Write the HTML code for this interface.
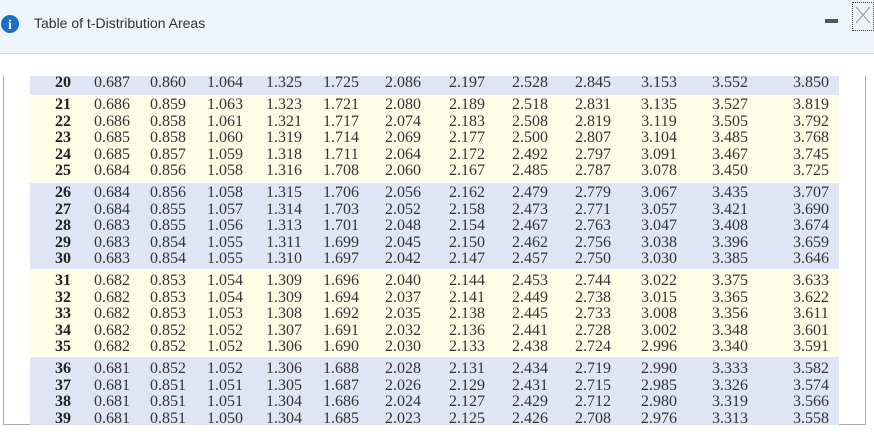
<!DOCTYPE html>
<html><head><style>
body{margin:0;width:874px;height:448px;background:#fff;position:relative;overflow:hidden;font-family:"Liberation Serif",serif;}
.hdr{position:absolute;left:0;top:0;width:874px;height:53px;background:#eef5fd;border-bottom:1px solid #c9ddf2;}
.title{position:absolute;left:34px;top:15px;font:14px "Liberation Sans",sans-serif;color:#333;}
.box{position:absolute;left:3px;top:76px;width:861px;height:348px;border:1px solid #aaa;border-top:none;}
.band{position:absolute;left:30px;width:809px;}
.r{position:absolute;left:0;width:874px;height:18px;line-height:18px;font-size:16px;color:#333;}
.r span{position:absolute;width:60px;text-align:center;}
.r b{position:absolute;left:55px;font-weight:bold;color:#222;}
</style></head><body>
<div class="hdr">
<svg style="position:absolute;left:0;top:14px" width="20" height="20"><circle cx="10" cy="10" r="9" fill="#1a6fc6"/><text x="10" y="15" text-anchor="middle" fill="#fff" font-family="Liberation Serif" font-weight="bold" font-size="14">i</text></svg>
<div class="title">Table of t-Distribution Areas</div>
<div style="position:absolute;left:825px;top:19px;width:13px;height:4px;background:#555"></div>
<div style="position:absolute;left:852px;top:2px;width:20px;height:27px;border:1px dotted #444;"><svg width="20" height="27"><path d="M3 4L17 20M17 4L3 20" stroke="#999" stroke-width="1"/></svg></div>
</div>
<div class="box"></div>
<div class="band" style="top:76px;height:19px;background:#dfe5f5"></div>
<div class="band" style="top:96px;height:86px;background:#fefee6"></div>
<div class="band" style="top:183px;height:86px;background:#dfe5f5"></div>
<div class="band" style="top:270px;height:86px;background:#fefee6"></div>
<div class="band" style="top:357px;height:68px;background:#dfe5f5"></div>
<div class="r" style="top:74px"><b>20</b><span style="left:82px">0.687</span><span style="left:138px">0.860</span><span style="left:195px">1.064</span><span style="left:254px">1.325</span><span style="left:311px">1.725</span><span style="left:373px">2.086</span><span style="left:437px">2.197</span><span style="left:500px">2.528</span><span style="left:563px">2.845</span><span style="left:629px">3.153</span><span style="left:700px">3.552</span><span style="left:781px">3.850</span></div>
<div class="r" style="top:96px"><b>21</b><span style="left:82px">0.686</span><span style="left:138px">0.859</span><span style="left:195px">1.063</span><span style="left:254px">1.323</span><span style="left:311px">1.721</span><span style="left:373px">2.080</span><span style="left:437px">2.189</span><span style="left:500px">2.518</span><span style="left:563px">2.831</span><span style="left:629px">3.135</span><span style="left:700px">3.527</span><span style="left:781px">3.819</span></div>
<div class="r" style="top:112.5px"><b>22</b><span style="left:82px">0.686</span><span style="left:138px">0.858</span><span style="left:195px">1.061</span><span style="left:254px">1.321</span><span style="left:311px">1.717</span><span style="left:373px">2.074</span><span style="left:437px">2.183</span><span style="left:500px">2.508</span><span style="left:563px">2.819</span><span style="left:629px">3.119</span><span style="left:700px">3.505</span><span style="left:781px">3.792</span></div>
<div class="r" style="top:129px"><b>23</b><span style="left:82px">0.685</span><span style="left:138px">0.858</span><span style="left:195px">1.060</span><span style="left:254px">1.319</span><span style="left:311px">1.714</span><span style="left:373px">2.069</span><span style="left:437px">2.177</span><span style="left:500px">2.500</span><span style="left:563px">2.807</span><span style="left:629px">3.104</span><span style="left:700px">3.485</span><span style="left:781px">3.768</span></div>
<div class="r" style="top:145.5px"><b>24</b><span style="left:82px">0.685</span><span style="left:138px">0.857</span><span style="left:195px">1.059</span><span style="left:254px">1.318</span><span style="left:311px">1.711</span><span style="left:373px">2.064</span><span style="left:437px">2.172</span><span style="left:500px">2.492</span><span style="left:563px">2.797</span><span style="left:629px">3.091</span><span style="left:700px">3.467</span><span style="left:781px">3.745</span></div>
<div class="r" style="top:162px"><b>25</b><span style="left:82px">0.684</span><span style="left:138px">0.856</span><span style="left:195px">1.058</span><span style="left:254px">1.316</span><span style="left:311px">1.708</span><span style="left:373px">2.060</span><span style="left:437px">2.167</span><span style="left:500px">2.485</span><span style="left:563px">2.787</span><span style="left:629px">3.078</span><span style="left:700px">3.450</span><span style="left:781px">3.725</span></div>
<div class="r" style="top:184px"><b>26</b><span style="left:82px">0.684</span><span style="left:138px">0.856</span><span style="left:195px">1.058</span><span style="left:254px">1.315</span><span style="left:311px">1.706</span><span style="left:373px">2.056</span><span style="left:437px">2.162</span><span style="left:500px">2.479</span><span style="left:563px">2.779</span><span style="left:629px">3.067</span><span style="left:700px">3.435</span><span style="left:781px">3.707</span></div>
<div class="r" style="top:200.5px"><b>27</b><span style="left:82px">0.684</span><span style="left:138px">0.855</span><span style="left:195px">1.057</span><span style="left:254px">1.314</span><span style="left:311px">1.703</span><span style="left:373px">2.052</span><span style="left:437px">2.158</span><span style="left:500px">2.473</span><span style="left:563px">2.771</span><span style="left:629px">3.057</span><span style="left:700px">3.421</span><span style="left:781px">3.690</span></div>
<div class="r" style="top:217px"><b>28</b><span style="left:82px">0.683</span><span style="left:138px">0.855</span><span style="left:195px">1.056</span><span style="left:254px">1.313</span><span style="left:311px">1.701</span><span style="left:373px">2.048</span><span style="left:437px">2.154</span><span style="left:500px">2.467</span><span style="left:563px">2.763</span><span style="left:629px">3.047</span><span style="left:700px">3.408</span><span style="left:781px">3.674</span></div>
<div class="r" style="top:233.5px"><b>29</b><span style="left:82px">0.683</span><span style="left:138px">0.854</span><span style="left:195px">1.055</span><span style="left:254px">1.311</span><span style="left:311px">1.699</span><span style="left:373px">2.045</span><span style="left:437px">2.150</span><span style="left:500px">2.462</span><span style="left:563px">2.756</span><span style="left:629px">3.038</span><span style="left:700px">3.396</span><span style="left:781px">3.659</span></div>
<div class="r" style="top:250px"><b>30</b><span style="left:82px">0.683</span><span style="left:138px">0.854</span><span style="left:195px">1.055</span><span style="left:254px">1.310</span><span style="left:311px">1.697</span><span style="left:373px">2.042</span><span style="left:437px">2.147</span><span style="left:500px">2.457</span><span style="left:563px">2.750</span><span style="left:629px">3.030</span><span style="left:700px">3.385</span><span style="left:781px">3.646</span></div>
<div class="r" style="top:272px"><b>31</b><span style="left:82px">0.682</span><span style="left:138px">0.853</span><span style="left:195px">1.054</span><span style="left:254px">1.309</span><span style="left:311px">1.696</span><span style="left:373px">2.040</span><span style="left:437px">2.144</span><span style="left:500px">2.453</span><span style="left:563px">2.744</span><span style="left:629px">3.022</span><span style="left:700px">3.375</span><span style="left:781px">3.633</span></div>
<div class="r" style="top:288.5px"><b>32</b><span style="left:82px">0.682</span><span style="left:138px">0.853</span><span style="left:195px">1.054</span><span style="left:254px">1.309</span><span style="left:311px">1.694</span><span style="left:373px">2.037</span><span style="left:437px">2.141</span><span style="left:500px">2.449</span><span style="left:563px">2.738</span><span style="left:629px">3.015</span><span style="left:700px">3.365</span><span style="left:781px">3.622</span></div>
<div class="r" style="top:305px"><b>33</b><span style="left:82px">0.682</span><span style="left:138px">0.853</span><span style="left:195px">1.053</span><span style="left:254px">1.308</span><span style="left:311px">1.692</span><span style="left:373px">2.035</span><span style="left:437px">2.138</span><span style="left:500px">2.445</span><span style="left:563px">2.733</span><span style="left:629px">3.008</span><span style="left:700px">3.356</span><span style="left:781px">3.611</span></div>
<div class="r" style="top:321.5px"><b>34</b><span style="left:82px">0.682</span><span style="left:138px">0.852</span><span style="left:195px">1.052</span><span style="left:254px">1.307</span><span style="left:311px">1.691</span><span style="left:373px">2.032</span><span style="left:437px">2.136</span><span style="left:500px">2.441</span><span style="left:563px">2.728</span><span style="left:629px">3.002</span><span style="left:700px">3.348</span><span style="left:781px">3.601</span></div>
<div class="r" style="top:338px"><b>35</b><span style="left:82px">0.682</span><span style="left:138px">0.852</span><span style="left:195px">1.052</span><span style="left:254px">1.306</span><span style="left:311px">1.690</span><span style="left:373px">2.030</span><span style="left:437px">2.133</span><span style="left:500px">2.438</span><span style="left:563px">2.724</span><span style="left:629px">2.996</span><span style="left:700px">3.340</span><span style="left:781px">3.591</span></div>
<div class="r" style="top:360px"><b>36</b><span style="left:82px">0.681</span><span style="left:138px">0.852</span><span style="left:195px">1.052</span><span style="left:254px">1.306</span><span style="left:311px">1.688</span><span style="left:373px">2.028</span><span style="left:437px">2.131</span><span style="left:500px">2.434</span><span style="left:563px">2.719</span><span style="left:629px">2.990</span><span style="left:700px">3.333</span><span style="left:781px">3.582</span></div>
<div class="r" style="top:376.5px"><b>37</b><span style="left:82px">0.681</span><span style="left:138px">0.851</span><span style="left:195px">1.051</span><span style="left:254px">1.305</span><span style="left:311px">1.687</span><span style="left:373px">2.026</span><span style="left:437px">2.129</span><span style="left:500px">2.431</span><span style="left:563px">2.715</span><span style="left:629px">2.985</span><span style="left:700px">3.326</span><span style="left:781px">3.574</span></div>
<div class="r" style="top:393px"><b>38</b><span style="left:82px">0.681</span><span style="left:138px">0.851</span><span style="left:195px">1.051</span><span style="left:254px">1.304</span><span style="left:311px">1.686</span><span style="left:373px">2.024</span><span style="left:437px">2.127</span><span style="left:500px">2.429</span><span style="left:563px">2.712</span><span style="left:629px">2.980</span><span style="left:700px">3.319</span><span style="left:781px">3.566</span></div>
<div class="r" style="top:409.5px;height:15px;overflow:hidden"><b>39</b><span style="left:82px">0.681</span><span style="left:138px">0.851</span><span style="left:195px">1.050</span><span style="left:254px">1.304</span><span style="left:311px">1.685</span><span style="left:373px">2.023</span><span style="left:437px">2.125</span><span style="left:500px">2.426</span><span style="left:563px">2.708</span><span style="left:629px">2.976</span><span style="left:700px">3.313</span><span style="left:781px">3.558</span></div>
</body></html>
